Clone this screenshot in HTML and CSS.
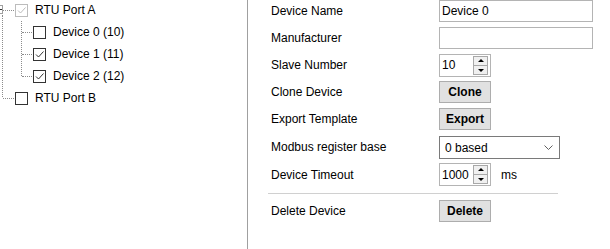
FILE: index.html
```html
<!DOCTYPE html>
<html lang="en">
<head>
  <meta charset="UTF-8">
  <meta name="viewport" content="width=device-width, initial-scale=1.0">
  <title>Device settings</title>
  <link rel="stylesheet" href="styles.css">
</head>
<body>
  <div class="window">
    <div class="tree-pane">
      <ul class="tree">
        <li class="node">
          <span class="expander"></span>
          <div class="row">
            <span class="check checked disabled">
              <svg viewBox="0 0 11 11" width="11" height="11"><path d="M2 5.5 L4.5 8 L9.5 2.5"/></svg>
            </span>
            <span class="caption">RTU Port A</span>
          </div>
          <ul class="children">
            <li class="row child">
              <span class="check"></span>
              <span class="caption">Device 0 (10)</span>
            </li>
            <li class="row child">
              <span class="check checked">
                <svg viewBox="0 0 11 11" width="11" height="11"><path d="M2 5.5 L4.5 8 L9.5 2.5"/></svg>
              </span>
              <span class="caption">Device 1 (11)</span>
            </li>
            <li class="row child">
              <span class="check checked">
                <svg viewBox="0 0 11 11" width="11" height="11"><path d="M2 5.5 L4.5 8 L9.5 2.5"/></svg>
              </span>
              <span class="caption">Device 2 (12)</span>
            </li>
          </ul>
        </li>
        <li class="node">
          <div class="row">
            <span class="check"></span>
            <span class="caption">RTU Port B</span>
          </div>
        </li>
      </ul>
    </div>

    <div class="props-pane">
      <form class="props">
        <label class="label" for="device-name">Device Name</label>
        <div class="field"><input class="textbox wide" id="device-name" type="text" value="Device 0"></div>

        <label class="label" for="manufacturer">Manufacturer</label>
        <div class="field"><input class="textbox wide" id="manufacturer" type="text" value=""></div>

        <label class="label" for="slave">Slave Number</label>
        <div class="field">
          <div class="spinner">
            <span class="spin-value">10</span>
            <span class="spin-buttons">
              <span class="spin-btn up"></span>
              <span class="spin-btn down"></span>
            </span>
          </div>
        </div>

        <span class="label">Clone Device</span>
        <div class="field"><button type="button" class="button">Clone</button></div>

        <span class="label">Export Template</span>
        <div class="field"><button type="button" class="button">Export</button></div>

        <span class="label">Modbus register base</span>
        <div class="field">
          <div class="combo">
            <span>0 based</span>
            <svg class="chevron" viewBox="0 0 9 5" width="9" height="5"><path d="M0.5 0.5 L4.5 4.5 L8.5 0.5"/></svg>
          </div>
        </div>

        <span class="label">Device Timeout</span>
        <div class="field">
          <div class="spinner">
            <span class="spin-value">1000</span>
            <span class="spin-buttons">
              <span class="spin-btn up"></span>
              <span class="spin-btn down"></span>
            </span>
          </div>
          <span class="unit">ms</span>
        </div>

        <hr class="separator">

        <span class="label">Delete Device</span>
        <div class="field"><button type="button" class="button">Delete</button></div>
      </form>
    </div>
  </div>
</body>
</html>
```

FILE: styles.css
```css
body {
  margin: 0;
  font-family: 'Liberation Sans', 'Noto Sans', sans-serif;
  font-size: 12px;
  color: #000;
  background: #fff;
}
.window {
  display: flex;
  height: 249px;
  width: 610px;
  overflow: hidden;
}
.tree-pane {
  width: 247px;
  border-right: 1px solid #a0a0a0;
  flex-shrink: 0;
  overflow: hidden;
}
.tree {
  list-style: none;
  margin: -1px 0 0 0;
  padding: 0;
  position: relative;
}
/* long dotted line joining the two ports */
.tree::before {
  content: "";
  position: absolute;
  left: 2px;
  top: 16px;
  height: 82px;
  border-left: 1px dotted #8c8c8c;
}
.node {
  position: relative;
}
.expander {
  position: absolute;
  left: -6px;
  top: 6px;
  width: 7px;
  height: 7px;
  border: 1px solid #a0a0a0;
  background: #fff;
  z-index: 1;
}
.expander::after {
  content: "";
  position: absolute;
  left: 1px;
  right: 0;
  top: 3px;
  height: 1px;
  background: #333;
}
.row {
  display: flex;
  align-items: center;
  height: 22px;
  padding-left: 15px;
  position: relative;
}
.row::before {
  content: "";
  position: absolute;
  left: 3px;
  width: 11px;
  top: 11px;
  border-top: 1px dotted #8c8c8c;
}
.children {
  list-style: none;
  margin: 0;
  padding: 0;
  position: relative;
}
.children::before {
  content: "";
  position: absolute;
  left: 21px;
  top: 0;
  bottom: 11px;
  border-left: 1px dotted #8c8c8c;
}
.row.child {
  padding-left: 33px;
}
.row.child::before {
  left: 22px;
  width: 10px;
}
.check {
  width: 11px;
  height: 11px;
  border: 1px solid #333;
  background: #fff;
  display: flex;
  flex-shrink: 0;
}
.check svg {
  fill: none;
  stroke: #333;
  stroke-width: 1;
}
.check.disabled {
  border-color: #bcbcbc;
}
.check.disabled svg {
  stroke: #bcbcbc;
}
.caption {
  margin-left: 7px;
  white-space: nowrap;
}

.props-pane {
  flex: 1;
  padding-left: 23px;
}
.props {
  display: grid;
  grid-template-columns: 168px 1fr;
  grid-template-rows: 22px 22px 22px 22px 22px 23px 23px 4px 22px;
  row-gap: 5px;
  margin: 0;
}
.label {
  display: flex;
  align-items: center;
  white-space: nowrap;
}
.field {
  display: flex;
  align-items: center;
}
.textbox {
  box-sizing: border-box;
  height: 22px;
  border: 1px solid #b4b4b4;
  padding: 0 2px;
  font: inherit;
  color: #000;
  outline: none;
}
.textbox.wide {
  width: 154px;
}
.spinner {
  box-sizing: border-box;
  width: 52px;
  height: 23px;
  border: 1px solid #b4b4b4;
  display: flex;
  align-items: center;
  justify-content: space-between;
  padding: 0 2px;
}
.spin-buttons {
  display: flex;
  flex-direction: column;
  border: 1px solid #a8a8a8;
}
.spin-btn {
  width: 13px;
  height: 8px;
  background: #f0f0f0;
  position: relative;
}
.spin-btn.up {
  border-bottom: 1px solid #a8a8a8;
}
.spin-btn::after {
  content: "";
  position: absolute;
  left: 4px;
  top: 2px;
  border-left: 3px solid transparent;
  border-right: 3px solid transparent;
}
.spin-btn.up::after {
  border-bottom: 3px solid #000;
}
.spin-btn.down::after {
  border-top: 3px solid #000;
  top: 3px;
}
.button {
  box-sizing: border-box;
  width: 52px;
  height: 22px;
  border: 1px solid #adadad;
  background: #e1e1e1;
  font: inherit;
  font-weight: bold;
  color: #000;
  padding: 0;
}
.combo {
  box-sizing: border-box;
  width: 121px;
  height: 23px;
  margin-top: 2px;
  border: 1px solid #7a7a7a;
  display: flex;
  align-items: center;
  justify-content: space-between;
  padding: 0 6px 0 5px;
}
.chevron {
  fill: none;
  stroke: #606060;
  stroke-width: 1;
}
.unit {
  margin-left: 10px;
}
.separator {
  grid-column: 1 / -1;
  align-self: start;
  width: 290px;
  margin: 2px 0 0 -3px;
  border: 0;
  border-top: 1px solid #d0d0d0;
  height: 0;
}
```
